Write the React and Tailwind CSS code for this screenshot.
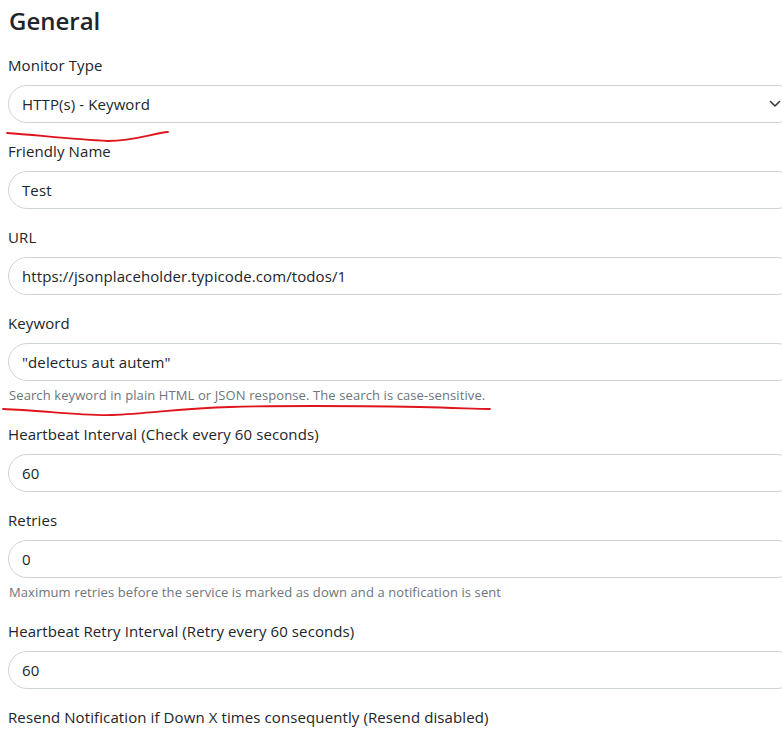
import React from 'react';

const FIELDS = [
  { label: 'Friendly Name', value: 'Test' },
  { label: 'URL', value: 'https://jsonplaceholder.typicode.com/todos/1' },
  {
    label: 'Keyword',
    value: '"delectus aut autem"',
    help: 'Search keyword in plain HTML or JSON response. The search is case-sensitive.',
    mark: true,
  },
  { label: 'Heartbeat Interval (Check every 60 seconds)', value: '60' },
  {
    label: 'Retries',
    value: '0',
    help: 'Maximum retries before the service is marked as down and a notification is sent',
  },
  { label: 'Heartbeat Retry Interval (Retry every 60 seconds)', value: '60' },
];

function Field({ label, value, help, mark }) {
  return (
    <div className="relative mb-4">
      <label className="block mb-2 text-[15px] leading-6 tracking-[0.1px] text-[#212529]">{label}</label>
      <div className="flex h-[38px] w-[788px] items-center rounded-full border border-[#ced4da] bg-white px-[13px] text-[15px] tracking-[0.1px] text-[#212529]">
        {value}
      </div>
      {help && (
        <p className="mt-1 pl-px text-[13px] leading-[21px] tracking-[0.1px] text-[#6c757d]">{help}</p>
      )}
      {mark && (
        <svg
          className="absolute left-[-8px] top-[93px] pointer-events-none"
          width="500"
          height="20"
          viewBox="0 0 500 20"
          fill="none"
        >
          <path
            d="M3 5 C 40 6, 80 12, 112 11 C 150 10, 180 4, 230 3 C 300 1, 360 2, 420 3 C 460 4, 478 5, 490 5"
            stroke="#e0141c"
            strokeWidth="1.8"
            strokeLinecap="round"
          />
        </svg>
      )}
    </div>
  );
}

export default function App() {
  return (
    <div
      className="h-[732px] w-[782px] overflow-hidden bg-white pl-2"
      style={{ fontFamily: '"Open Sans", "Noto Sans", sans-serif' }}
    >
      <h4 className="mb-[17px] pt-[5px] pl-px text-[24px] font-semibold leading-[31px] text-[#212529]">General</h4>

      <div className="relative mb-4">
        <label className="block mb-2 text-[15px] leading-6 tracking-[0.1px] text-[#212529]">Monitor Type</label>
        <div className="flex h-[38px] w-[788px] items-center justify-between rounded-full border border-[#ced4da] bg-white pl-[13px] pr-[14px] text-[15px] tracking-[0.1px] text-[#212529]">
          <span>HTTP(s) - Keyword</span>
          <svg width="12" height="8" viewBox="0 0 12 8" fill="none">
            <path d="M1.5 1.5 L6 6 L10.5 1.5" stroke="#343a40" strokeWidth="1.6" strokeLinecap="round" strokeLinejoin="round" />
          </svg>
        </div>
        <svg
          className="absolute left-[-2px] top-[74px] pointer-events-none"
          width="180"
          height="16"
          viewBox="0 0 180 16"
          fill="none"
        >
          <path
            d="M1 6 C 30 8, 65 12, 102 14 C 128 14, 148 6, 162 5"
            stroke="#e0141c"
            strokeWidth="1.8"
            strokeLinecap="round"
          />
        </svg>
      </div>

      {FIELDS.map((field) => (
        <Field key={field.label} {...field} />
      ))}

      <label className="block mb-2 text-[15px] leading-6 tracking-[0.1px] text-[#212529]">
        Resend Notification if Down X times consequently (Resend disabled)
      </label>
    </div>
  );
}
